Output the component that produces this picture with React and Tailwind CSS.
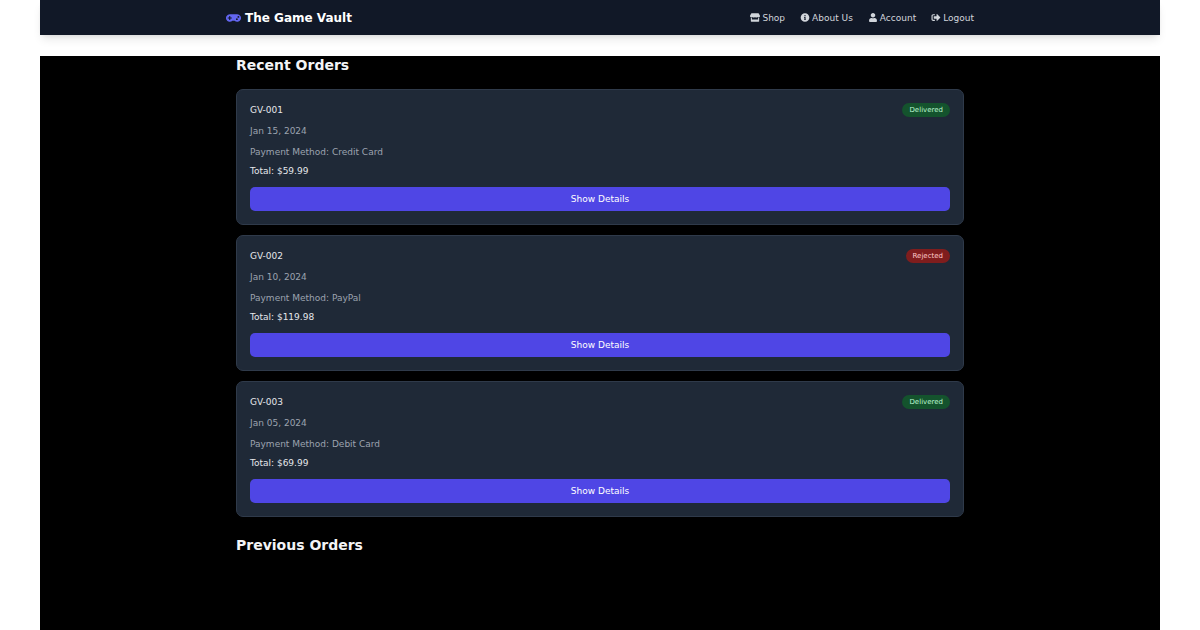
import { FaGamepad, FaStore, FaInfoCircle, FaUser, FaSignOutAlt } from "react-icons/fa";

const navItems = [
    { name: "Shop", icon: FaStore, path: "/shop" },
    { name: "About Us", icon: FaInfoCircle, path: "/about" },
    { name: "Account", icon: FaUser, path: "/account" },
    { name: "Logout", icon: FaSignOutAlt, path: "/logout" }
];

const orders = [
    { id: "GV-001", date: "Jan 15, 2024", payment: "Credit Card", total: "$59.99", status: "Delivered" },
    { id: "GV-002", date: "Jan 10, 2024", payment: "PayPal", total: "$119.98", status: "Rejected" },
    { id: "GV-003", date: "Jan 05, 2024", payment: "Debit Card", total: "$69.99", status: "Delivered" }
];

const statusStyles = {
    Delivered: "bg-[#14532d] text-[#bbf7d0]",
    Rejected: "bg-[#7f1d1d] text-[#fecaca]"
};

function Header() {
    return (
        <header className="bg-[#111827] shadow-[0_6px_9px_-2px_rgba(0,0,0,0.1),0_2px_4px_-2px_rgba(0,0,0,0.1)]">
            <div className="max-w-[748px] mx-auto h-[35px] flex items-center justify-between">
                <a href="/" className="flex items-center gap-1 text-[12px] leading-[14px] font-bold text-white">
                    <FaGamepad className="w-[15px] h-[14px] text-[#6366f1]" />
                    The Game Vault
                </a>
                <nav className="flex items-center gap-[15px]">
                    {navItems.map((item) => (
                        <a key={item.name} href={item.path} className="flex items-center gap-0.5 text-[#d1d5db]">
                            <item.icon className="w-[10px] h-[9px]" />
                            {item.name}
                        </a>
                    ))}
                </nav>
            </div>
        </header>
    );
}

function OrderCard({ order }) {
    return (
        <article className="bg-[#1f2937] border border-[#2f3a4a] rounded-[7px] p-[13px]">
            <div className="flex items-center justify-between">
                <h3 className="text-[#e5e7eb]">{order.id}</h3>
                <span className={`rounded-full px-[7px] text-[7px] leading-[14px] ${statusStyles[order.status]}`}>
                    {order.status}
                </span>
            </div>
            <p className="mt-[7px] text-[#9ca3af]">{order.date}</p>
            <p className="mt-[7px] text-[#9ca3af]">Payment Method: {order.payment}</p>
            <p className="mt-[5px] text-[#e5e7eb]">Total: {order.total}</p>
            <button type="button" className="mt-[9px] w-full h-6 rounded-[5px] bg-[#4f46e5] text-white cursor-pointer">
                Show Details
            </button>
        </article>
    );
}

export default function App() {
    return (
        <div className="min-h-screen flex flex-col px-10 bg-white font-['DejaVu_Sans',sans-serif] text-[9px] leading-[14px]">
            <Header />
            <main className="mt-[21px] flex-1 bg-black">
                <div className="max-w-[728px] mx-auto">
                    <h2 className="mb-[15px] text-[14px] leading-[18px] font-bold text-[#f3f4f6]">Recent Orders</h2>
                    <div className="flex flex-col gap-2.5">
                        {orders.map((order) => (
                            <OrderCard key={order.id} order={order} />
                        ))}
                    </div>
                    <h2 className="mt-[19px] text-[14px] leading-[18px] font-bold text-[#f3f4f6]">Previous Orders</h2>
                </div>
            </main>
        </div>
    );
}
